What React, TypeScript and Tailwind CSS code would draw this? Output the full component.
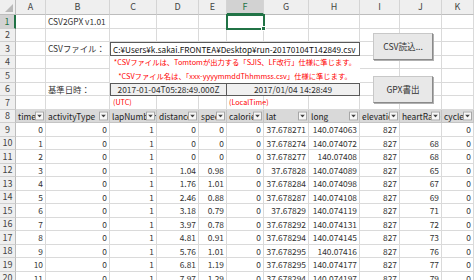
import clsx from 'clsx';

const COLS = ['A', 'B', 'C', 'D', 'E', 'F', 'G', 'H', 'I', 'J', 'K'];
const HEADERS = ['time', 'activityType', 'lapNumber', 'distance', 'speed', 'calorie', 'lat', 'long', 'elevation', 'heartRate', 'cycle'];

const DATA: (string | number)[][] = [
  [0, 0, 1, 0, 0, 0, '37.678271', '140.074063', 827, '', 0],
  [1, 0, 1, 0, 0, 0, '37.678274', '140.074072', 827, 68, 0],
  [2, 0, 1, 0, 0, 0, '37.678277', '140.07408', 827, 68, 0],
  [3, 0, 1, '1.04', '0.98', 0, '37.67828', '140.074089', 827, 65, 0],
  [4, 0, 1, '1.76', '1.01', 0, '37.678284', '140.074098', 827, 67, 0],
  [5, 0, 1, '2.46', '0.88', 0, '37.678287', '140.074108', 827, 69, 0],
  [6, 0, 1, '3.18', '0.79', 0, '37.67829', '140.074119', 827, 71, 0],
  [7, 0, 1, '3.97', '0.78', 0, '37.678292', '140.074131', 827, 72, 0],
  [8, 0, 1, '4.81', '0.91', 0, '37.678294', '140.074145', 827, 73, 0],
  [9, 0, 1, '5.76', '1.01', 0, '37.678295', '140.07416', 827, 76, 0],
  [10, 0, 1, '6.81', '1.19', 0, '37.678295', '140.074177', 827, 77, 0],
  [11, 0, 1, '7.97', '1.29', 0, '37.678294', '140.074197', 827, 79, 0],
];

const line = 'border-r border-b border-[#dadada]';

function RowHead({ n, active = false }: { n: number; active?: boolean }) {
  return (
    <div
      className={clsx(
        'flex items-center justify-center border-b border-[#cfcfcf] text-[9px]',
        active ? 'bg-[#d2d2d2] text-[#217346] border-r-2 border-r-[#217346]' : 'border-r border-r-[#bdbdbd] bg-[#efefef] text-[#444]'
      )}
    >
      {n}
    </div>
  );
}

function Blanks({ n }: { n: number }) {
  return (
    <>
      {Array.from({ length: n }, (_, i) => (
        <div key={i} className={line} />
      ))}
    </>
  );
}

function Label({ children }: { children: React.ReactNode }) {
  return <div className={clsx(line, 'flex items-center whitespace-nowrap pl-[2px] text-[8.4px] text-[#333]')}>{children}</div>;
}

function Note({ children }: { children: React.ReactNode }) {
  return (
    <div className="col-span-6 flex items-center justify-center whitespace-nowrap text-[7.3px] text-[#ff0000]">
      {children}
    </div>
  );
}

function FilterButton() {
  return (
    <span className="absolute right-[1px] top-1/2 flex h-[9px] w-[9px] -translate-y-1/2 items-center justify-center border border-[#a6a6a6] bg-[#f7f7f7]">
      <svg width="5" height="3" viewBox="0 0 5 3">
        <path d="M0 0h5L2.5 3z" fill="#444" />
      </svg>
    </span>
  );
}

function SheetButton({ label, top }: { label: string; top: string }) {
  return (
    <div
      className={clsx(
        'absolute left-[373px] flex h-[27px] w-[60px] items-center justify-center border border-[#c8c8c8] border-b-[#8a8a8a] border-r-[#8a8a8a] bg-[#e8e8e8] text-[8.6px] text-[#333] shadow-[1px_1px_0_#b0b0b0]',
        top
      )}
    >
      {label}
    </div>
  );
}

export default function App() {
  return (
    <div className="relative h-[280px] w-[474px] overflow-hidden bg-white font-['Noto_Sans_CJK_JP',sans-serif]">
      <div className="grid grid-cols-[16px_30px_64px_47px_42px_28px_37px_45px_51px_40px_42px_32px] grid-rows-[15px_14px_13px_14px_13px_14px_13px_14px_13px_14px_13px_14px_13px_14px_13px_14px_13px_14px_13px_14px_13px]">
        {/* column letters */}
        <div className="relative border-r border-b border-[#bdbdbd] bg-[#efefef]">
          <svg className="absolute bottom-[2px] right-[2px]" width="8" height="8" viewBox="0 0 8 8">
            <path d="M8 0v8H0z" fill="#b9b9b9" />
          </svg>
        </div>
        {COLS.map((c) => (
          <div
            key={c}
            className={clsx(
              'flex items-center justify-center border-r border-r-[#d4d4d4] text-[9px]',
              c === 'F' ? 'border-b-2 border-b-[#217346] bg-[#d2d2d2] text-[#217346]' : 'border-b border-b-[#bdbdbd] bg-[#efefef] text-[#444]'
            )}
          >
            {c}
          </div>
        ))}

        {/* row 1 */}
        <RowHead n={1} active />
        <div className={line} />
        <Label>CSV2GPX v1.01</Label>
        <Blanks n={3} />
        <div className={clsx(line, 'relative outline-2 -outline-offset-1 outline-[#217346]')}>
          <span className="absolute -bottom-[3px] -right-[3px] h-[5px] w-[5px] border border-white bg-[#217346]" />
        </div>
        <Blanks n={5} />

        {/* row 2 */}
        <RowHead n={2} />
        <Blanks n={11} />

        {/* row 3 */}
        <RowHead n={3} />
        <div className={line} />
        <Label>CSVファイル：</Label>
        <div className="col-span-6 flex items-center overflow-hidden whitespace-nowrap border border-[#5a5a5a] pl-[2px] text-[8.2px] text-[#111]">
          C:¥Users¥k.sakai.FRONTEA¥Desktop¥run-20170104T142849.csv
        </div>
        <Blanks n={3} />

        {/* row 4 */}
        <RowHead n={4} />
        <Blanks n={2} />
        <Note>*CSVファイルは、Tomtomが出力する「SJIS、LF改行」仕様に準じます。</Note>
        <Blanks n={3} />

        {/* row 5 */}
        <RowHead n={5} />
        <Blanks n={2} />
        <Note>*CSVファイル名は、「xxx-yyyymmddThhmmss.csv」仕様に準じます。</Note>
        <Blanks n={3} />

        {/* row 6 */}
        <RowHead n={6} />
        <div className={line} />
        <Label>基準日時：</Label>
        <div className="col-span-3 flex items-center justify-center whitespace-nowrap border border-[#5a5a5a] bg-[#f0f0f0] text-[8.4px] text-[#333]">
          2017-01-04T05:28:49.000Z
        </div>
        <div className="col-span-3 flex items-center justify-center whitespace-nowrap border border-l-0 border-[#5a5a5a] bg-[#f0f0f0] text-[8.4px] text-[#333]">
          2017/01/04 14:28:49
        </div>
        <Blanks n={3} />

        {/* row 7 */}
        <RowHead n={7} />
        <Blanks n={2} />
        <div className={clsx(line, 'flex items-center whitespace-nowrap pl-[3px] text-[7.2px] text-[#ff0000]')}>(UTC)</div>
        <Blanks n={2} />
        <div className={clsx(line, 'relative z-10 flex items-center whitespace-nowrap pl-[2px] text-[7.2px] text-[#ff0000]')}>(LocalTime)</div>
        <Blanks n={5} />

        {/* row 8: table header */}
        <RowHead n={8} />
        {HEADERS.map((h) => (
          <div
            key={h}
            className="relative flex items-center overflow-hidden whitespace-nowrap border-r border-b border-[#c4c4c4] bg-[#d9d9d9] pl-[2px] text-[8.4px] text-[#222]"
          >
            {h}
            <FilterButton />
          </div>
        ))}

        {/* data rows */}
        {DATA.map((row, r) => (
          <div key={r} className="contents">
            <RowHead n={r + 9} />
            {row.map((v, c) => (
              <div key={c} className={clsx(line, 'flex items-center justify-end pr-[2px] text-[8.4px] text-[#333]')}>
                {v}
              </div>
            ))}
          </div>
        ))}
      </div>

      <SheetButton label="CSV読込..." top="top-[33px]" />
      <SheetButton label="GPX書出" top="top-[76px]" />
    </div>
  );
}
